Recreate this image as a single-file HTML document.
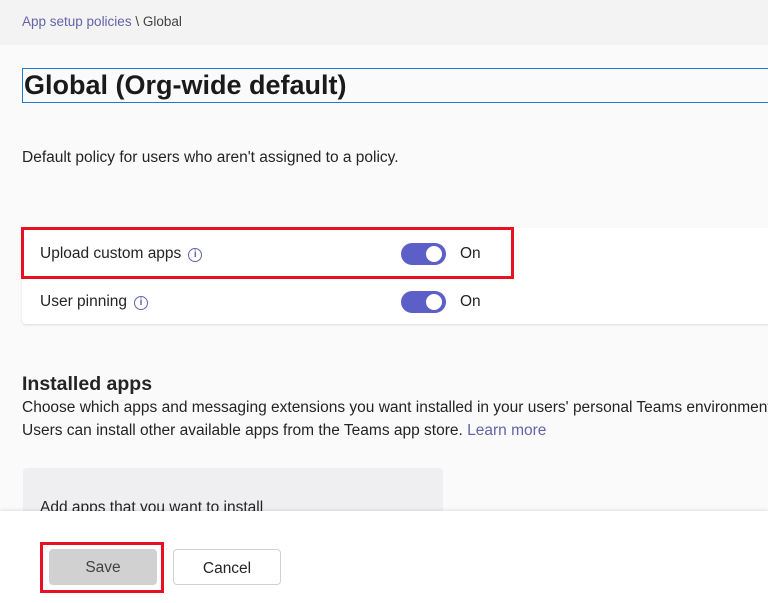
<!DOCTYPE html>
<html><head><meta charset="utf-8"><style>
*{margin:0;padding:0;box-sizing:border-box}
body{width:768px;height:603px;overflow:hidden;background:#fafafa;font-family:"Segoe UI","Liberation Sans",sans-serif;color:#242424;position:relative}
.hdr{position:absolute;left:0;top:0;width:768px;height:45px;background:#f3f3f3}
.bc{position:absolute;left:22px;top:14px;font-size:13.5px;color:#424242}
.bc a{color:#6264a7;text-decoration:none}
.title{position:absolute;left:22px;top:68px;width:760px;height:35px;border:1.5px solid #1f7ad6;border-right:none;font-size:27px;font-weight:bold;line-height:33px;padding-left:1px;color:#1a1a1a}
.desc{position:absolute;left:22px;top:149px;font-size:15.5px}
.card{position:absolute;left:22px;top:228px;width:760px;height:96px;background:#fff;border-radius:4px;box-shadow:0 1px 2px rgba(0,0,0,.12)}
.row{position:absolute;left:40px;font-size:15.5px}
.info{display:inline-block;width:14px;height:14px;border:1.2px solid #6264a7;border-radius:50%;color:#6264a7;font-size:10px;line-height:12px;text-align:center;margin-left:7px;vertical-align:1px;font-weight:bold}
.tog{position:absolute;left:401px;width:45px;height:22px;border-radius:11px;background:#5b5fc7}
.tog:after{content:"";position:absolute;right:4px;top:3px;width:16px;height:16px;border-radius:50%;background:#fff}
.on{position:absolute;left:460px;font-size:15.5px}
.red{position:absolute;border:3px solid #e81123}
h2{position:absolute;left:22px;top:373px;font-size:19.5px;font-weight:bold}
.p{position:absolute;left:22px;font-size:15.5px;white-space:nowrap}
.p a{color:#6264a7;text-decoration:none}
.gray{position:absolute;left:23px;top:468px;width:420px;height:60px;background:#efeff2;border-radius:4px}
.gray span{position:absolute;left:17px;top:31px;font-size:15.5px}
.foot{position:absolute;left:0;top:511px;width:768px;height:92px;background:#fff;box-shadow:0 -1px 3px rgba(0,0,0,.1)}
.btn{position:absolute;top:549px;height:36px;border-radius:4px;font-size:15.5px;text-align:center;line-height:37px}
</style></head><body>
<div class="hdr"><div class="bc"><a>App setup policies</a> \ Global</div></div>
<div class="title">Global (Org-wide default)</div>
<div class="desc">Default policy for users who aren't assigned to a policy.</div>
<div class="card"></div>
<div class="row" style="top:245px">Upload custom apps<span class="info">i</span></div>
<div class="tog" style="top:243px"></div><div class="on" style="top:245px">On</div>
<div class="row" style="top:293px">User pinning<span class="info">i</span></div>
<div class="tog" style="top:291px"></div><div class="on" style="top:293px">On</div>
<div class="red" style="left:21px;top:227px;width:493px;height:52px"></div>
<h2>Installed apps</h2>
<div class="p" style="top:399px">Choose which apps and messaging extensions you want installed in your users' personal Teams environment</div>
<div class="p" style="top:422px">Users can install other available apps from the Teams app store. <a>Learn more</a></div>
<div class="gray"><span>Add apps that you want to install</span></div>
<div class="foot"></div>
<div class="btn" style="left:49px;width:108px;background:#d1d1d1;color:#424242">Save</div>
<div class="red" style="left:40px;top:542px;width:124px;height:51px"></div>
<div class="btn" style="left:173px;width:108px;background:#fff;border:1px solid #d1d1d1">Cancel</div>
</body></html>
